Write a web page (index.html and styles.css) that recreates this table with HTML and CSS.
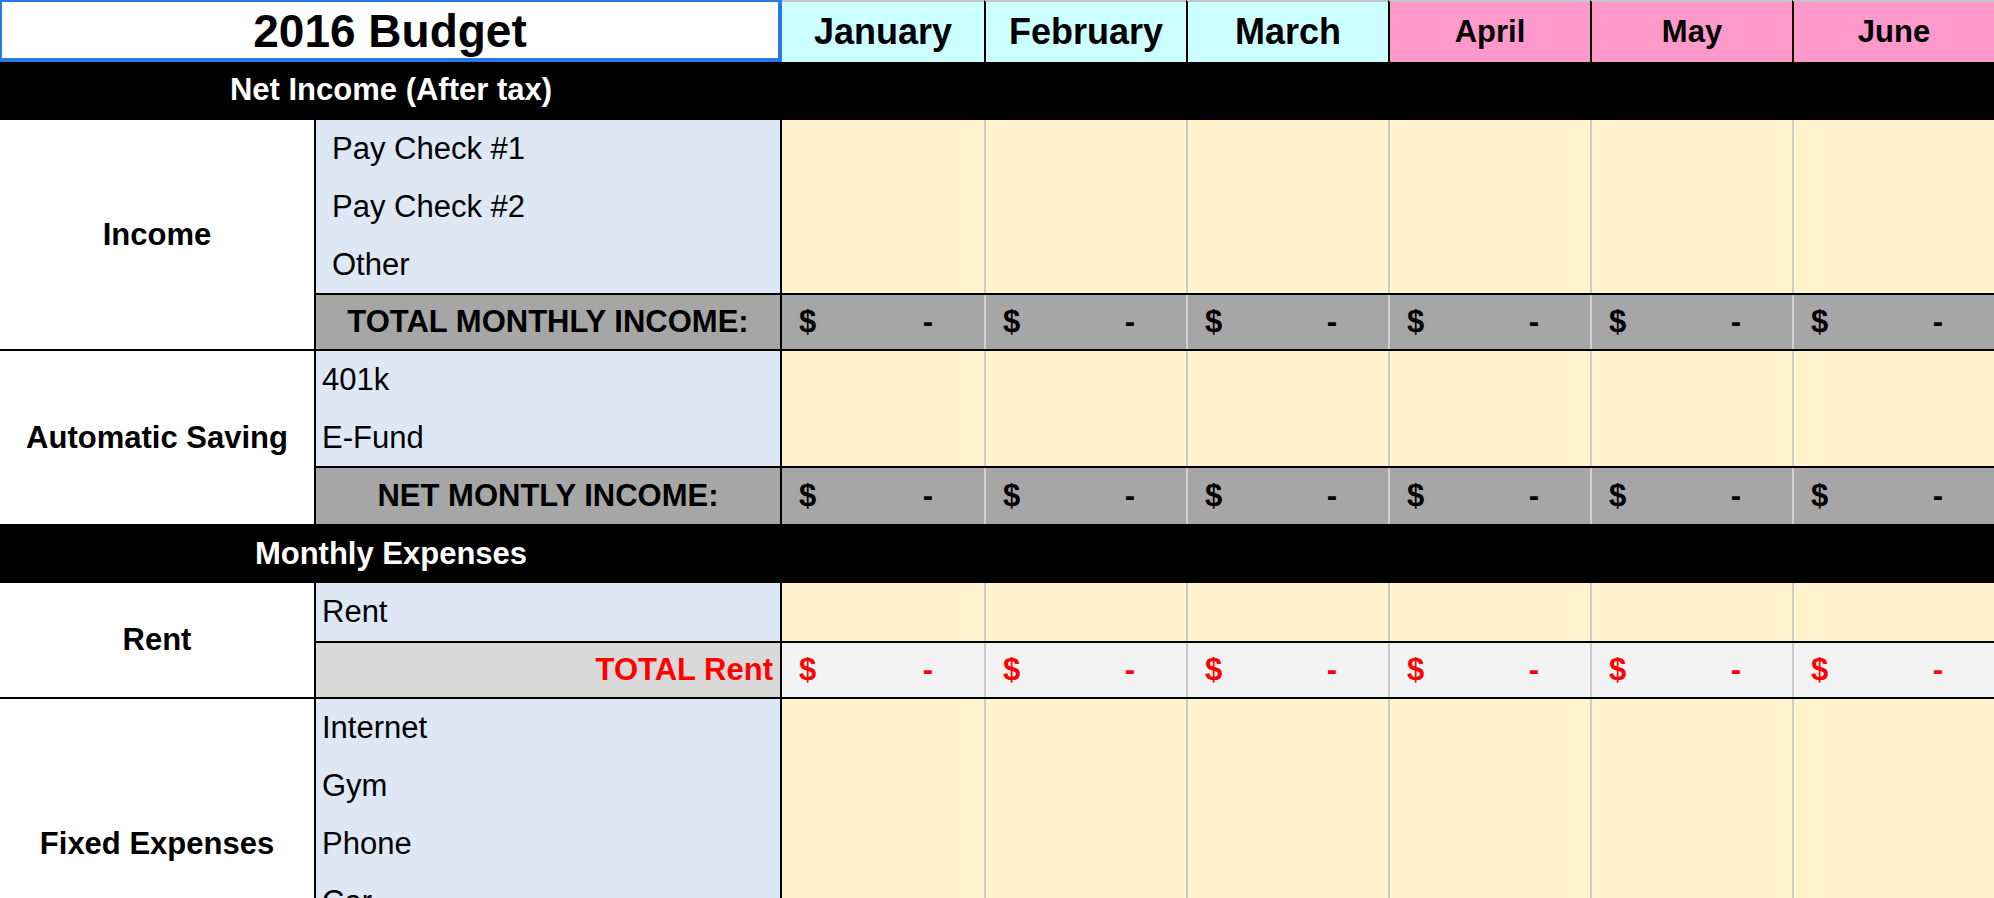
FILE: index.html
```html
<!DOCTYPE html>
<html lang="en">
<head>
<meta charset="utf-8">
<title>2016 Budget</title>
<link rel="stylesheet" href="styles.css">
</head>
<body>
<div class="sheet">
  <div class="hdr">
    <div class="title">2016 Budget</div>
    <div class="mon q1">January</div>
    <div class="mon q1 sep">February</div>
    <div class="mon q1 sep">March</div>
    <div class="mon q2 sep">April</div>
    <div class="mon q2 sep">May</div>
    <div class="mon q2 sep">June</div>
  </div>

  <div class="band"><span class="band-text">Net Income (After tax)</span></div>

  <section class="block closed">
    <div class="lbl">Income</div>
    <div class="rows">
      <div class="row"><div class="item indent">Pay Check #1</div><div class="c"></div><div class="c"></div><div class="c"></div><div class="c"></div><div class="c"></div><div class="c"></div></div>
      <div class="row"><div class="item indent">Pay Check #2</div><div class="c"></div><div class="c"></div><div class="c"></div><div class="c"></div><div class="c"></div><div class="c"></div></div>
      <div class="row short"><div class="item indent">Other</div><div class="c"></div><div class="c"></div><div class="c"></div><div class="c"></div><div class="c"></div><div class="c"></div></div>
      <div class="row tot"><div class="item">TOTAL MONTHLY INCOME:</div>
        <div class="c m"><span>$</span><span>-</span></div><div class="c m"><span>$</span><span>-</span></div><div class="c m"><span>$</span><span>-</span></div><div class="c m"><span>$</span><span>-</span></div><div class="c m"><span>$</span><span>-</span></div><div class="c m"><span>$</span><span>-</span></div>
      </div>
    </div>
  </section>

  <section class="block">
    <div class="lbl">Automatic Saving</div>
    <div class="rows">
      <div class="row"><div class="item">401k</div><div class="c"></div><div class="c"></div><div class="c"></div><div class="c"></div><div class="c"></div><div class="c"></div></div>
      <div class="row short"><div class="item">E-Fund</div><div class="c"></div><div class="c"></div><div class="c"></div><div class="c"></div><div class="c"></div><div class="c"></div></div>
      <div class="row tot net"><div class="item">NET MONTLY INCOME:</div>
        <div class="c m"><span>$</span><span>-</span></div><div class="c m"><span>$</span><span>-</span></div><div class="c m"><span>$</span><span>-</span></div><div class="c m"><span>$</span><span>-</span></div><div class="c m"><span>$</span><span>-</span></div><div class="c m"><span>$</span><span>-</span></div>
      </div>
    </div>
  </section>

  <div class="band band2"><span class="band-text">Monthly Expenses</span></div>

  <section class="block closed">
    <div class="lbl">Rent</div>
    <div class="rows">
      <div class="row"><div class="item">Rent</div><div class="c"></div><div class="c"></div><div class="c"></div><div class="c"></div><div class="c"></div><div class="c"></div></div>
      <div class="row tot red"><div class="item">TOTAL Rent</div>
        <div class="c m"><span>$</span><span>-</span></div><div class="c m"><span>$</span><span>-</span></div><div class="c m"><span>$</span><span>-</span></div><div class="c m"><span>$</span><span>-</span></div><div class="c m"><span>$</span><span>-</span></div><div class="c m"><span>$</span><span>-</span></div>
      </div>
    </div>
  </section>

  <section class="block">
    <div class="lbl">Fixed Expenses</div>
    <div class="rows">
      <div class="row"><div class="item">Internet</div><div class="c"></div><div class="c"></div><div class="c"></div><div class="c"></div><div class="c"></div><div class="c"></div></div>
      <div class="row"><div class="item">Gym</div><div class="c"></div><div class="c"></div><div class="c"></div><div class="c"></div><div class="c"></div><div class="c"></div></div>
      <div class="row"><div class="item">Phone</div><div class="c"></div><div class="c"></div><div class="c"></div><div class="c"></div><div class="c"></div><div class="c"></div></div>
      <div class="row"><div class="item">Car</div><div class="c"></div><div class="c"></div><div class="c"></div><div class="c"></div><div class="c"></div><div class="c"></div></div>
      <div class="row"><div class="item"></div><div class="c"></div><div class="c"></div><div class="c"></div><div class="c"></div><div class="c"></div><div class="c"></div></div>
    </div>
  </section>
</div>
</body>
</html>
```

FILE: styles.css
```css
* { box-sizing: border-box; }

html, body {
  margin: 0;
  padding: 0;
  background: #ffffff;
  overflow: hidden;
}

body {
  font-family: "Liberation Sans", Arial, sans-serif;
  color: #000;
  width: 1994px;
  height: 898px;
}

.sheet {
  width: 1994px;
}

/* Header row */
.hdr {
  display: grid;
  grid-template-columns: 782px repeat(6, 202px);
  height: 60px;
}

.title {
  border-style: solid;
  border-color: #2a78e4;
  border-width: 2px 4px 4px 2px;
  background: #ffffff;
  font-weight: bold;
  font-size: 46px;
  display: flex;
  align-items: center;
  justify-content: center;
  padding-top: 2px;
}

.mon {
  border-top: 2px solid #c4c4c4;
  font-weight: bold;
  display: flex;
  align-items: center;
  justify-content: center;
}

.mon.sep { border-left: 2px solid #000; }

.q1 { background: #ccffff; font-size: 36px; }
.q2 { background: #ff99cc; font-size: 31px; }

/* Black section bands */
.band {
  height: 60px;
  background: #000;
  color: #fff;
  display: flex;
  align-items: center;
}
.band2 { height: 59px; }

.band-text {
  width: 782px;
  text-align: center;
  font-weight: bold;
  font-size: 31px;
}

/* Blocks */
.block {
  display: flex;
}
.block.closed { border-bottom: 2px solid #000; }

.lbl {
  flex: 0 0 314px;
  background: #fff;
  display: flex;
  align-items: center;
  justify-content: center;
  font-weight: bold;
  font-size: 31px;
  text-align: center;
}

.rows {
  flex: 0 0 1680px;
  display: flex;
  flex-direction: column;
}

.row {
  display: grid;
  grid-template-columns: 468px repeat(6, 202px);
  height: 58px;
}
.row.short { height: 57px; }

.item {
  background: #dde8f4;
  border-left: 2px solid #000;
  border-right: 2px solid #000;
  display: flex;
  align-items: center;
  padding-left: 6px;
  font-size: 31px;
  white-space: nowrap;
}
.item.indent { padding-left: 16px; }

.c {
  background: #fff2cc;
}
.c + .c { border-left: 2px solid #cccccc; }

/* Total rows */
.row.tot {
  height: 56px;
  border-top: 2px solid #000;
}
.row.tot.net { height: 58px; }

.row.tot .item {
  background: #a6a6a6;
  font-weight: bold;
  justify-content: center;
  padding-left: 0;
}
.row.tot .c {
  background: #a6a6a6;
}
.row.tot .c + .c { border-left-color: #d2d2d2; }

.c.m {
  display: flex;
  align-items: center;
  justify-content: space-between;
  padding: 0 51px 0 17px;
  font-weight: bold;
  font-size: 31px;
}

.row.tot.red .item {
  background: #d9d9d9;
  color: #ff0000;
  justify-content: flex-end;
  padding-right: 7px;
}
.row.tot.red .c {
  background: #f3f3f3;
  color: #ff0000;
}
.row.tot.red .c + .c { border-left-color: #cccccc; }
```
